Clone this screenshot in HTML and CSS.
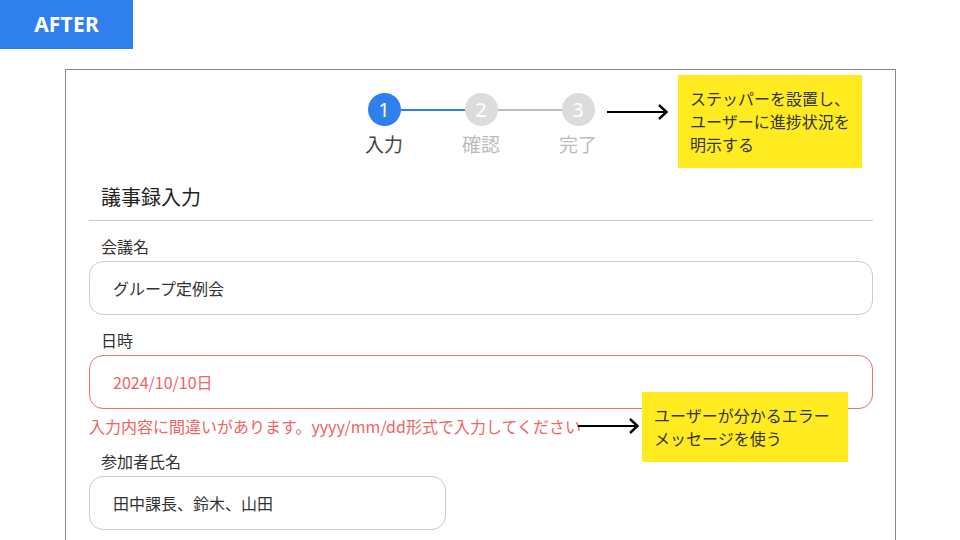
FILE: index.html
```html
<!DOCTYPE html>
<html lang="ja">
<head>
<meta charset="utf-8">
<title>AFTER</title>
<link rel="stylesheet" href="styles.css">
</head>
<body>
<div class="badge">AFTER</div>
<div class="card">
  <div class="stepper">
    <div class="step active">
      <div class="circle">1</div>
      <div class="step-label">入力</div>
    </div>
    <div class="connector done"></div>
    <div class="step">
      <div class="circle">2</div>
      <div class="step-label">確認</div>
    </div>
    <div class="connector"></div>
    <div class="step">
      <div class="circle">3</div>
      <div class="step-label">完了</div>
    </div>
  </div>

  <h1 class="title">議事録入力</h1>

  <div class="field">
    <div class="label">会議名</div>
    <div class="input">グループ定例会</div>
  </div>
  <div class="field">
    <div class="label">日時</div>
    <div class="input error">2024/10/10日</div>
    <div class="error-msg">入力内容に間違いがあります。yyyy/mm/dd形式で入力してください</div>
  </div>
  <div class="field after-error">
    <div class="label">参加者氏名</div>
    <div class="input short">田中課長、鈴木、山田</div>
  </div>
  <div class="field last">
    <div class="label">議事録内容</div>
  </div>

  <svg class="arrow arrow-1" width="62" height="20" viewBox="0 0 62 20"><line x1="0" y1="10" x2="59" y2="10" stroke="#000" stroke-width="2.2"/><polyline points="52,3 59.5,10 52,17" fill="none" stroke="#000" stroke-width="2.4"/></svg>
  <div class="note note-1">ステッパーを設置し、<br>ユーザーに進捗状況を<br>明示する</div>

  <svg class="arrow arrow-2" width="62" height="20" viewBox="0 0 62 20"><line x1="0" y1="10" x2="59" y2="10" stroke="#000" stroke-width="2.2"/><polyline points="52,3 59.5,10 52,17" fill="none" stroke="#000" stroke-width="2.4"/></svg>
  <div class="note note-2">ユーザーが分かるエラー<br>メッセージを使う</div>
</div>
</body>
</html>
```

FILE: styles.css
```css
html, body {
  margin: 0;
  padding: 0;
  background: #fff;
  overflow: hidden;
}
body {
  font-family: "Noto Sans CJK JP", "Noto Sans", sans-serif;
  color: #333;
  width: 960px;
  height: 540px;
}
.badge {
  width: 133px;
  height: 49px;
  background: #2F80ED;
  color: #fff;
  font-family: "Noto Sans", "Noto Sans CJK JP", sans-serif;
  font-weight: 700;
  font-size: 21px;
  line-height: 49px;
  text-align: center;
  letter-spacing: 0.2px;
}
.card {
  position: relative;
  box-sizing: border-box;
  width: 831px;
  height: 520px;
  margin: 20px 0 0 65px;
  border: 1px solid #888;
  border-bottom: none;
  padding: 23px 22px 0 23px;
}
.stepper {
  display: flex;
  justify-content: center;
  align-items: flex-start;
}
.step {
  width: 33px;
  display: flex;
  flex-direction: column;
  align-items: center;
}
.circle {
  width: 33px;
  height: 33px;
  border-radius: 50%;
  background: #DCDCDC;
  color: #fff;
  font-family: "Noto Sans", sans-serif;
  font-size: 20px;
  line-height: 33px;
  text-align: center;
}
.step.active .circle {
  background: #2F80ED;
}
.step-label {
  margin-top: 5px;
  font-size: 19px;
  line-height: 26px;
  white-space: nowrap;
  color: #BBBBBB;
}
.step.active .step-label {
  color: #444;
}
.connector {
  width: 64px;
  height: 2px;
  margin-top: 15.5px;
  background: #BDBDBD;
}
.connector.done {
  background: #2F80ED;
}
.title {
  margin: 25px 0 0;
  padding: 0 12px 8px;
  font-size: 20px;
  font-weight: 400;
  line-height: 30px;
  color: #222;
  border-bottom: 1px solid #C8C8C8;
}
.field {
  margin-top: 13px;
}
.field:first-of-type {
  margin-top: 12px;
}
.field.after-error {
  margin-top: 11px;
}
.field.last {
  margin-top: 5px;
}
.label {
  padding-left: 12px;
  font-size: 16px;
  line-height: 24px;
  margin-bottom: 3px;
  color: #333;
}
.input {
  box-sizing: border-box;
  height: 54px;
  border: 1px solid #CCCCCC;
  border-radius: 14px;
  padding: 0 23px;
  display: flex;
  align-items: center;
  font-size: 16px;
  color: #333;
}
.input.error {
  border-color: #E87272;
  color: #EE6464;
}
.input.short {
  width: 357px;
}
.error-msg {
  margin-top: 5px;
  font-size: 16px;
  line-height: 24px;
  color: #EE6464;
  white-space: nowrap;
}
.arrow {
  position: absolute;
  display: block;
}
.arrow-1 {
  left: 541px;
  top: 32px;
}
.arrow-2 {
  left: 512px;
  top: 346px;
}
.note {
  position: absolute;
  box-sizing: border-box;
  background: #FFEB1F;
  color: #333;
  font-size: 16px;
  line-height: 23px;
  padding: 12px 0 0 12px;
  white-space: nowrap;
}
.note-1 {
  left: 612px;
  top: 5px;
  width: 184px;
  height: 93px;
}
.note-2 {
  left: 576px;
  top: 322px;
  width: 206px;
  height: 70px;
}
```
